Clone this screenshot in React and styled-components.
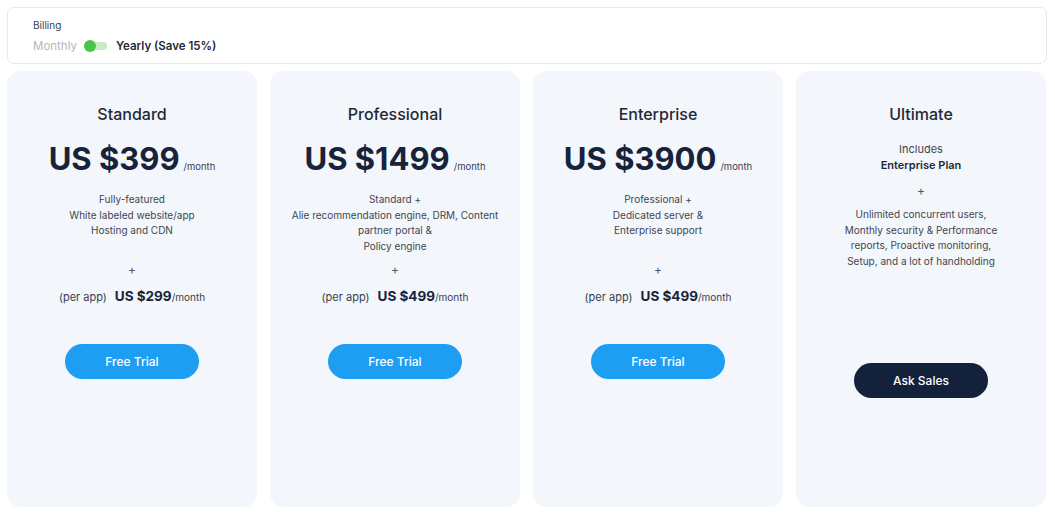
import React from "react";
import styled, { createGlobalStyle } from "styled-components";

const GlobalStyle = createGlobalStyle`
  body {
    margin: 0;
    background: #ffffff;
    font-family: Inter, "Noto Sans", sans-serif;
    color: #1f2937;
  }
`;

const plans = [
  {
    name: "Standard",
    price: "US $399",
    features: ["Fully-featured", "White labeled website/app", "Hosting and CDN"],
    perApp: "US $299",
  },
  {
    name: "Professional",
    price: "US $1499",
    features: [
      "Standard +",
      "Alie recommendation engine, DRM, Content",
      "partner portal &",
      "Policy engine",
    ],
    perApp: "US $499",
  },
  {
    name: "Enterprise",
    price: "US $3900",
    features: ["Professional +", "Dedicated server &", "Enterprise support"],
    perApp: "US $499",
  },
];

function PlanCard({ name, price, features, perApp }) {
  return (
    <Card>
      <PlanName>{name}</PlanName>
      <PriceRow>
        <Price>{price}</Price>
        <Period>/month</Period>
      </PriceRow>
      <Features $minLines={4} $top={13}>
        {features.map((f) => (
          <div key={f}>{f}</div>
        ))}
      </Features>
      <Plus>+</Plus>
      <PerApp>
        <PerAppLabel>(per app)</PerAppLabel>
        <PerAppPrice>{perApp}</PerAppPrice>
        <PerAppPeriod>/month</PerAppPeriod>
      </PerApp>
      <ActionButton>Free Trial</ActionButton>
    </Card>
  );
}

function UltimateCard() {
  return (
    <Card>
      <PlanName>Ultimate</PlanName>
      <Includes>
        <div>Includes</div>
        <strong>Enterprise Plan</strong>
      </Includes>
      <SmallPlus>+</SmallPlus>
      <Features $top={13}>
        <div>Unlimited concurrent users,</div>
        <div>Monthly security &amp; Performance</div>
        <div>reports, Proactive monitoring,</div>
        <div>Setup, and a lot of handholding</div>
      </Features>
      <ActionButton $dark $top={94}>
        Ask Sales
      </ActionButton>
    </Card>
  );
}

export default function App() {
  return (
    <Page>
      <GlobalStyle />
      <BillingBox>
        <BillingLabel>Billing</BillingLabel>
        <ToggleRow>
          <Option>Monthly</Option>
          <Toggle>
            <Knob />
          </Toggle>
          <Option $active>Yearly (Save 15%)</Option>
        </ToggleRow>
      </BillingBox>
      <Grid>
        {plans.map((p) => (
          <PlanCard key={p.name} {...p} />
        ))}
        <UltimateCard />
      </Grid>
    </Page>
  );
}

const Page = styled.div`
  padding: 7px 8px 7px 7px;
  display: flex;
  flex-direction: column;
  gap: 7px;
`;

const BillingBox = styled.div`
  height: 57px;
  box-sizing: border-box;
  border: 1px solid #e6e8ec;
  border-radius: 7px;
  padding: 11px 25px 0;
`;

const BillingLabel = styled.div`
  font-size: 10px;
  line-height: 12px;
  color: #374151;
`;

const ToggleRow = styled.div`
  display: flex;
  align-items: center;
  gap: 7px;
  margin-top: 7px;
  height: 16px;
`;

const Option = styled.span`
  font-size: 11.5px;
  font-weight: ${(p) => (p.$active ? 600 : 400)};
  color: ${(p) => (p.$active ? "#1f2937" : "#b3b7bd")};
`;

const Toggle = styled.div`
  width: 23px;
  height: 8px;
  border-radius: 4px;
  background: #c6ecc6;
  position: relative;
  margin-right: 2px;
`;

const Knob = styled.div`
  position: absolute;
  left: 0;
  top: -2px;
  width: 12px;
  height: 12px;
  border-radius: 50%;
  background: #4cc44c;
`;

const Grid = styled.div`
  display: grid;
  grid-template-columns: repeat(4, 250px);
  gap: 13px;
`;

const Card = styled.div`
  height: 436px;
  box-sizing: border-box;
  background: #f3f6fb;
  border-radius: 14px;
  padding-top: 33px;
  display: flex;
  flex-direction: column;
  align-items: center;
  text-align: center;
`;

const PlanName = styled.div`
  font-size: 16px;
  line-height: 20px;
  font-weight: 500;
  color: #1f2937;
`;

const PriceRow = styled.div`
  display: flex;
  align-items: baseline;
  gap: 4px;
  margin-top: 15px;
  height: 40px;
`;

const Price = styled.span`
  font-size: 31px;
  line-height: 40px;
  font-weight: 700;
  color: #17233a;
`;

const Period = styled.span`
  font-size: 9.5px;
  color: #374151;
`;

const Features = styled.div`
  margin-top: ${(p) => p.$top ?? 12}px;
  font-size: 10px;
  line-height: 15.5px;
  color: #3f4651;
  min-height: ${(p) => (p.$minLines ? p.$minLines * 15.5 : 0)}px;
`;

const Plus = styled.div`
  margin-top: 8px;
  font-size: 12px;
  line-height: 16px;
  color: #4b5563;
`;

const SmallPlus = styled(Plus)`
  margin-top: 10px;
  margin-bottom: -5px;
`;

const Includes = styled.div`
  margin-top: 17px;
  font-size: 11px;
  line-height: 16px;
  color: #3f4651;

  strong {
    font-weight: 600;
    color: #1f2937;
  }
`;

const PerApp = styled.div`
  margin-top: 8px;
  display: flex;
  align-items: baseline;
  line-height: 20px;
  color: #374151;
`;

const PerAppLabel = styled.span`
  font-size: 11px;
  margin-right: 8px;
`;

const PerAppPrice = styled.span`
  font-size: 13.5px;
  font-weight: 700;
  color: #17233a;
`;

const PerAppPeriod = styled.span`
  font-size: 10px;
`;

const ActionButton = styled.button`
  margin-top: ${(p) => p.$top ?? 37}px;
  width: 134px;
  height: 35px;
  border: none;
  border-radius: 18px;
  background: ${(p) => (p.$dark ? "#13213b" : "#1e9ef3")};
  color: #ffffff;
  font-family: Inter, "Noto Sans", sans-serif;
  font-size: 12px;
  font-weight: 500;
  cursor: pointer;
`;
